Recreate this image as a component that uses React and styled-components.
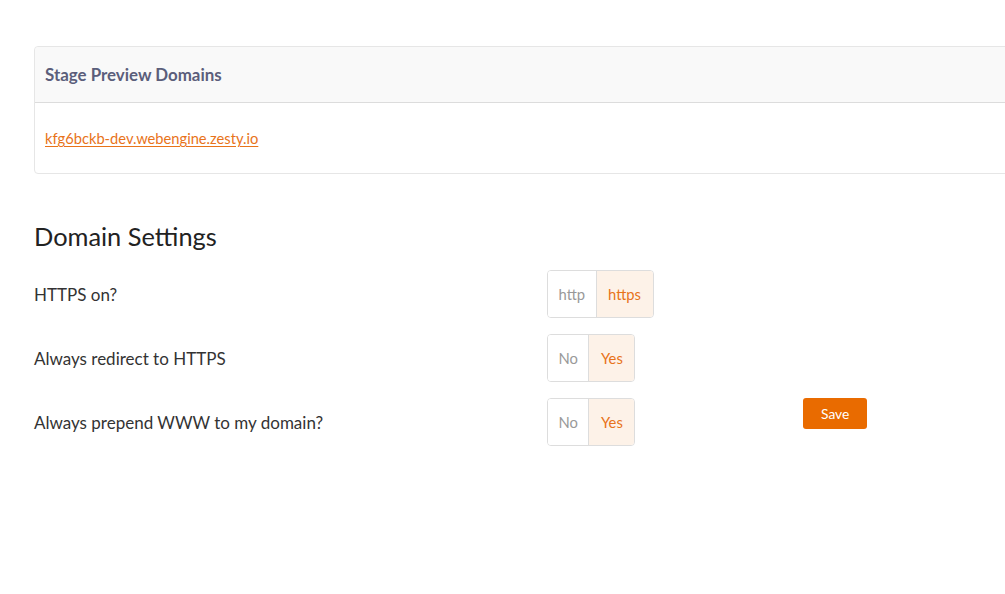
import styled, { createGlobalStyle } from "styled-components";

const GlobalStyle = createGlobalStyle`
  html, body {
    margin: 0;
    padding: 0;
    background: #fff;
    overflow: hidden;
  }
  body {
    font-family: "Lato", "Open Sans", sans-serif;
    color: #333;
  }
`;

const Page = styled.div`
  width: 1005px;
  height: 594px;
  padding: 46px 0 0 34px;
  box-sizing: border-box;
  overflow: hidden;
`;

const Card = styled.section`
  width: 1000px;
  border: 1px solid #e6e6e6;
  border-radius: 4px;
  background: #fff;
`;

const CardHeader = styled.header`
  height: 55px;
  display: flex;
  align-items: center;
  padding: 0 10px;
  background: #f9f9f9;
  border-bottom: 1px solid #dcdcdc;
  border-radius: 4px 4px 0 0;
  font-size: 16.9px;
  font-weight: 700;
  color: #5b5e7b;
`;

const CardBody = styled.div`
  height: 70px;
  display: flex;
  align-items: center;
  padding: 0 10px;
`;

const DomainLink = styled.a`
  color: #e8731a;
  font-size: 14.7px;
  text-decoration: underline;
  text-underline-offset: 2px;
`;

const Heading = styled.h2`
  margin: 46px 0 18px;
  font-size: 25.4px;
  font-weight: 400;
  color: #222;
  line-height: 32px;
`;

const SettingsGrid = styled.div`
  display: grid;
  grid-template-columns: 513px 256px auto;
  row-gap: 16px;
  align-items: center;
`;

const Label = styled.span`
  font-size: 17px;
  color: #333;
`;

const Toggle = styled.div`
  display: inline-flex;
  box-sizing: border-box;
  height: 48px;
  border: 1px solid #ddd;
  border-radius: 4px;
  overflow: hidden;
  justify-self: start;
`;

const Option = styled.button`
  border: none;
  margin: 0;
  padding: 0 ${({ $active }) => ($active ? 11.5 : 10.5)}px;
  font-family: inherit;
  font-size: 14.8px;
  background: ${({ $active }) => ($active ? "#fdf2e8" : "#fff")};
  color: ${({ $active }) => ($active ? "#e8731a" : "#999")};
  & + & {
    border-left: 1px solid #ddd;
  }
`;

const SaveButton = styled.button`
  justify-self: start;
  align-self: start;
  height: 31px;
  padding: 0 18px;
  border: none;
  border-radius: 3px;
  background: #e96b00;
  color: #fff;
  font-family: inherit;
  font-size: 13.8px;
`;

const rows = [
  { label: "HTTPS on?", off: "http", on: "https" },
  { label: "Always redirect to HTTPS", off: "No", on: "Yes" },
  { label: "Always prepend WWW to my domain?", off: "No", on: "Yes", save: true },
];

export default function App() {
  return (
    <>
      <GlobalStyle />
      <Page>
        <Card>
          <CardHeader>Stage Preview Domains</CardHeader>
          <CardBody>
            <DomainLink href="#">kfg6bckb-dev.webengine.zesty.io</DomainLink>
          </CardBody>
        </Card>
        <Heading>Domain Settings</Heading>
        <SettingsGrid>
          {rows.map((r) => (
            <>
              <Label key={r.label}>{r.label}</Label>
              <Toggle>
                <Option>{r.off}</Option>
                <Option $active>{r.on}</Option>
              </Toggle>
              {r.save ? <SaveButton>Save</SaveButton> : <span />}
            </>
          ))}
        </SettingsGrid>
      </Page>
    </>
  );
}
